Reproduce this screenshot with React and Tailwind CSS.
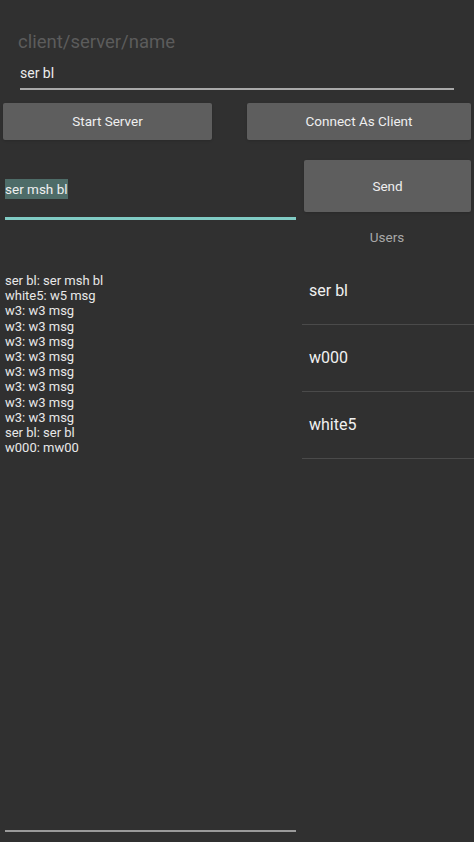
import React from 'react';

const messages = [
  'ser bl: ser msh bl',
  'white5: w5 msg',
  'w3: w3 msg',
  'w3: w3 msg',
  'w3: w3 msg',
  'w3: w3 msg',
  'w3: w3 msg',
  'w3: w3 msg',
  'w3: w3 msg',
  'w3: w3 msg',
  'ser bl: ser bl',
  'w000: mw00',
];

const users = ['ser bl', 'w000', 'white5'];

export default function App() {
  return (
    <div
      className="w-[474px] h-[842px] bg-[#303030] text-white flex flex-col overflow-hidden"
      style={{ fontFamily: 'Roboto, "Noto Sans", sans-serif' }}
    >
      {/* name field */}
      <div className="pt-[30px] pl-[18px] pr-[20px]">
        <div className="text-[18.5px] leading-[24px] text-[#5c5c5c]">client/server/name</div>
        <div className="pl-[2px] mt-[10px] text-[14px] leading-[18px] text-[#ececec]">ser bl</div>
        <div className="ml-[2px] mt-[6px] h-[2px] bg-[#a9a9a9]" />
      </div>

      {/* mode buttons */}
      <div className="flex justify-between mt-[13px] px-[3px]">
        <button className="w-[209px] h-[37px] rounded-[2px] bg-[#5e5e5e] text-[13.5px] text-[#efefef] shadow-sm">
          Start Server
        </button>
        <button className="w-[224px] h-[37px] rounded-[2px] bg-[#5e5e5e] text-[13.5px] text-[#efefef] shadow-sm">
          Connect As Client
        </button>
      </div>

      <div className="flex flex-1 mt-[20px]">
        {/* chat column */}
        <div className="w-[300px] flex flex-col">
          <div className="pl-[5px] pr-[4px]">
            <div className="h-[57px] pt-[17px]">
              <span className="inline-block bg-[#4e6c68] text-[13.5px] leading-[20px] text-[#f0f0f0]">ser msh bl</span>
            </div>
            <div className="h-[3px] bg-[#80cbc4]" />
          </div>
          <div className="pl-[5px] mt-[53px] flex flex-col text-[13px] leading-[15.2px] text-[#e8e8e8]">
            {messages.map((m, i) => (
              <div key={i}>{m}</div>
            ))}
          </div>
          <div className="flex-1" />
          <div className="ml-[5px] mr-[4px] mb-[10px] h-[2px] bg-[#9a9a9a]" />
        </div>

        {/* side column */}
        <div className="flex-1 flex flex-col">
          <button className="ml-[4px] mr-[3px] h-[52px] rounded-[2px] bg-[#5e5e5e] text-[13.5px] text-[#efefef] shadow-sm">
            Send
          </button>
          <div className="h-[46px] pt-[4px] flex items-center justify-center text-[13.5px] text-[#a8a8a8]">Users</div>
          <div className="ml-[2px] flex flex-col">
            {users.map((u) => (
              <div
                key={u}
                className="h-[67px] flex items-center pl-[7px] border-b border-[#4a4a4a] text-[16px] text-[#f0f0f0]"
              >
                {u}
              </div>
            ))}
          </div>
        </div>
      </div>
    </div>
  );
}
